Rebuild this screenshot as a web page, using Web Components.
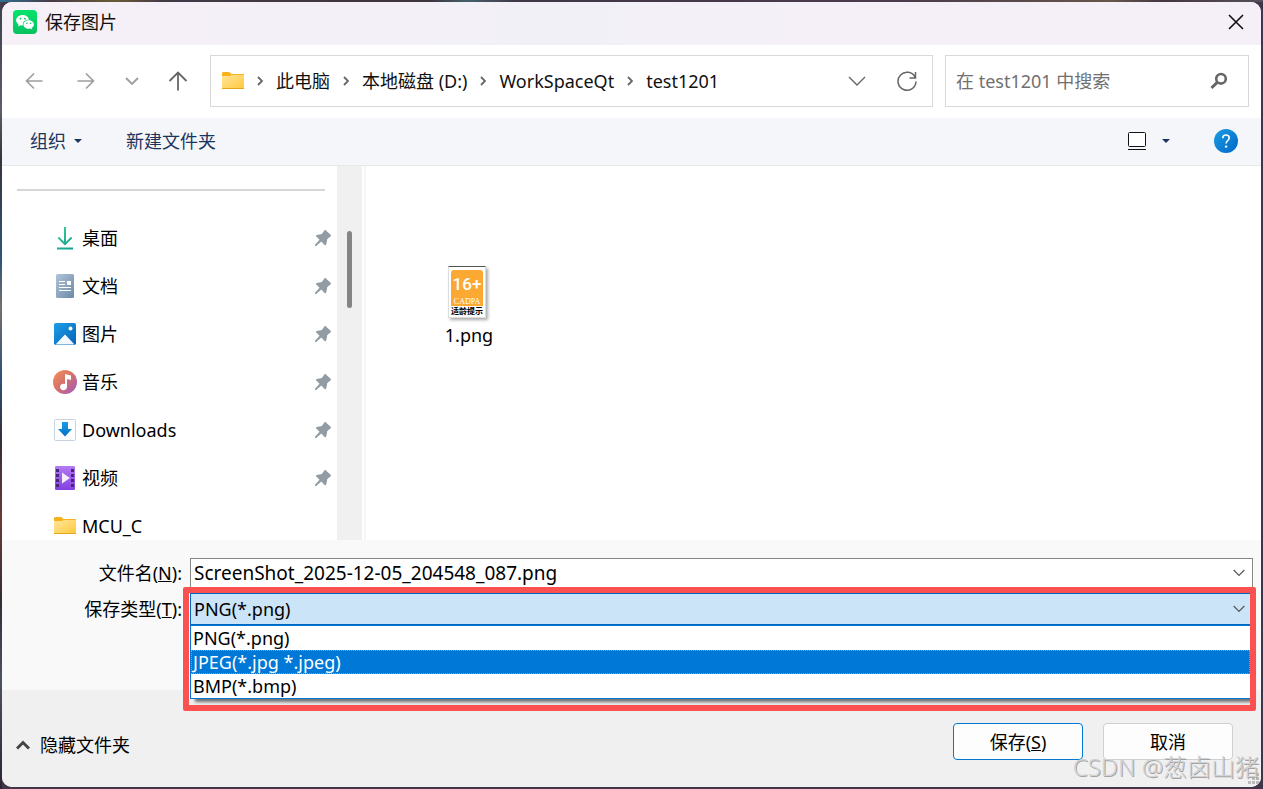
<!DOCTYPE html>
<html lang="zh-CN">
<head>
  <meta charset="utf-8">
  <meta name="viewport" content="width=device-width, initial-scale=1">
  <title>保存图片</title>
  <style>
    html, body { height: 100%; }
    body {
      box-sizing: border-box;
      margin: 0;
      padding: 2px;
      overflow: hidden;
      background:
        linear-gradient(90deg, #2f6f8c 0, #463c48 4%, #6b5a34 9%, #423a46 13%, #3c3540 34%, #46606b 37%, #3f3746 41%, #4b3c4c 72%, #66564a 88%, #443644 92%, #56505a 100%) top / 100% 2px no-repeat,
        linear-gradient(#3a3f4a 0, #5a5f68 14%, #39333c 20%, #2d5578 33%, #77706c 39%, #2d4f78 48%, #352f39 56%, #6b3a35 66%, #332d36 76%, #4d5360 86%, #2b2530 100%) left / 2px 100% no-repeat,
        #43344a;
      font: 18px/24px "Noto Sans", "Noto Sans CJK SC", sans-serif;
      color: #111;
    }
  </style>
</head>
<body>
  <save-dialog>
    <dialog-titlebar slot="title">保存图片</dialog-titlebar>
    <address-row slot="address" placeholder="在 test1201 中搜索">
      <a href="#pc">此电脑</a>
      <a href="#d">本地磁盘 (D:)</a>
      <a href="#workspace">WorkSpaceQt</a>
      <a href="#test1201">test1201</a>
    </address-row>
    <command-bar slot="commands"></command-bar>
    <nav-pane slot="nav">
      <nav-item icon="desktop" pinned>桌面</nav-item>
      <nav-item icon="document" pinned>文档</nav-item>
      <nav-item icon="picture" pinned>图片</nav-item>
      <nav-item icon="music" pinned>音乐</nav-item>
      <nav-item icon="download" pinned>Downloads</nav-item>
      <nav-item icon="video" pinned>视频</nav-item>
      <nav-item icon="folder">MCU_C</nav-item>
    </nav-pane>
    <file-tile slot="files">1.png</file-tile>
    <name-field slot="fields" value="ScreenShot_2025-12-05_204548_087.png">文件名(<u>N</u>):</name-field>
    <type-field slot="fields" active="1" options="PNG(*.png)|JPEG(*.jpg *.jpeg)|BMP(*.bmp)">保存类型(<u>T</u>):</type-field>
    <dialog-footer slot="footer"></dialog-footer>
  </save-dialog>

  <script>
    (() => {
      const ICONS = {
        wechat: {
          size: [24, 24],
          body: `
            <defs><linearGradient id="g" x1="0" y1="0" x2="0" y2="1"><stop offset="0" stop-color="#04e36c"/><stop offset="1" stop-color="#06c160"/></linearGradient></defs>
            <rect width="24" height="24" rx="4" fill="url(#g)"/>
            <path fill="#fff" d="M9.6 5C6 5 3.1 7.4 3.1 10.3c0 1.7 1 3.2 2.5 4.2L5 16.4l2.3-1.1c.8.2 1.7.3 2.6.3-.1-.4-.2-.8-.2-1.200 0-2.600 2.600-4.700 5.700-4.700h.6C15.500 6.900 12.800 5 9.600 5z"/>
            <path fill="#fff" d="M15.700 10.200c-2.900 0-5.300 1.900-5.300 4.300s2.400 4.300 5.300 4.300c.6 0 1.200-.1 1.800-.3l1.800.9-.5-1.600c1.300-.8 2.100-2 2.100-3.300 0-2.400-2.300-4.300-5.200-4.300z"/>
            <g fill="#05cc63"><circle cx="7.500" cy="8.700" r=".9"/><circle cx="11.900" cy="8.700" r=".9"/><circle cx="14" cy="13.200" r=".8"/><circle cx="17.500" cy="13.200" r=".8"/></g>`,
        },
        close: { size: [16, 16], body: '<path d="M1 1l14 14M15 1L1 15" fill="none" stroke="#111" stroke-width="1.600"/>' },
        back: { size: [18, 18], body: '<path d="M17.500 9H1.500M9 1.500L1.500 9 9 16.500" fill="none" stroke="#9d9d9d" stroke-width="1.600"/>' },
        forward: { size: [18, 18], body: '<path d="M.5 9h16M9 1.500L16.500 9 9 16.500" fill="none" stroke="#9d9d9d" stroke-width="1.600"/>' },
        recent: { size: [14, 8], body: '<path d="M1 1l6 6 6-6" fill="none" stroke="#9d9d9d" stroke-width="1.800"/>' },
        up: { size: [20, 20], body: '<path d="M10 19.500V2M1.500 10L10 1.500l8.500 8.500" fill="none" stroke="#666" stroke-width="1.800"/>' },
        folder: {
          size: [24, 20],
          body: `
            <defs><linearGradient id="g" x1="0" y1="0" x2="1" y2="1"><stop offset="0" stop-color="#ffe69b"/><stop offset="1" stop-color="#ffc83d"/></linearGradient></defs>
            <path d="M1 2.500C1 1.700 1.600 1 2.500 1h5.300c.5 0 .8.2 1.100.5L10.500 3H22c.6 0 1 .4 1 1v4H1z" fill="#f5b21a"/>
            <path d="M1 5h8l1.500-1H23v13.500c0 .3-.2.500-.5.500h-21c-.3 0-.5-.2-.5-.500z" fill="url(#g)"/>
            <path d="M1 17.500h22" stroke="#e5a51c"/>`,
        },
        crumb: { size: [6, 10], body: '<path d="M1 1l4 4-4 4" fill="none" stroke="#666" stroke-width="1.800"/>' },
        open: { size: [18, 10], body: '<path d="M1 1l8 8 8-8" fill="none" stroke="#666" stroke-width="1.400"/>' },
        refresh: { size: [22, 22], body: '<path d="M19.200 7.500A9 9 0 1 0 20 11.500M19.500 2v6h-6" fill="none" stroke="#666" stroke-width="1.500"/>' },
        search: { size: [18, 18], body: '<circle cx="11" cy="6.800" r="4.800" fill="none" stroke="#666" stroke-width="2.600"/><path d="M7.500 10.200L1.500 16" stroke="#666" stroke-width="3"/>' },
        caret: { size: [8, 4], body: '<path d="M0 0h8L4 4z" fill="#1c355e"/>' },
        view: { size: [20, 20], body: '<rect x="1.500" y="1.500" width="17" height="14" rx="1" fill="#fff" stroke="#111"/><path d="M1 18.500h18" stroke="#111"/>' },
        help: {
          size: [24, 24],
          body: `
            <defs><linearGradient id="g" x1="0" y1="0" x2="1" y2="1"><stop offset="0" stop-color="#1b9de2"/><stop offset="1" stop-color="#0067c8"/></linearGradient></defs>
            <circle cx="12" cy="12" r="12" fill="url(#g)"/>
            <path d="M8.800 9.200c0-2 1.400-3.200 3.200-3.200s3.200 1.100 3.200 2.900c0 2.500-3.100 2.700-3.100 5.600" fill="none" stroke="#fff" stroke-width="1.600"/><circle cx="12.100" cy="17.600" r="1.200" fill="#fff"/>`,
        },
        desktop: {
          size: [24, 24],
          body: `
            <defs><linearGradient id="g" gradientUnits="userSpaceOnUse" x1="4" y1="1" x2="20" y2="23"><stop offset="0" stop-color="#3dcf8e"/><stop offset="1" stop-color="#0f9d94"/></linearGradient></defs>
            <path d="M11 1h2v16h-2zM4.700 12.200L6 10.800l6 6 6-6 1.300 1.400-7.300 7.200zM4 21.500h16v2H4z" fill="url(#g)"/>`,
        },
        document: {
          size: [24, 24],
          body: `
            <defs><linearGradient id="g" x1="0" y1="0" x2="1" y2="1"><stop offset="0" stop-color="#b0c4d9"/><stop offset="1" stop-color="#6d89a8"/></linearGradient></defs>
            <rect x="3" width="18" height="24" rx="1.500" fill="url(#g)"/>
            <path d="M6 7.500h6M6 10.500h6M6 13.500h12M6 16.500h12" stroke="#fff" stroke-width="1.100"/><rect x="14" y="7" width="4" height="4" fill="#fff"/>`,
        },
        picture: {
          size: [24, 24],
          body: `
            <defs><linearGradient id="g" x1="0" y1="0" x2="1" y2="1"><stop offset="0" stop-color="#1ba0e6"/><stop offset="1" stop-color="#0562b8"/></linearGradient></defs>
            <rect x="1" y="1" width="22" height="22" rx="1.800" fill="url(#g)"/>
            <path d="M2.500 22.500l8.700-9.300c.5-.5 1.100-.5 1.600 0l8.700 9.300z" fill="#f4f9ff"/><circle cx="17.500" cy="6.500" r="2" fill="#fff"/>`,
        },
        music: {
          size: [24, 24],
          body: `
            <defs><linearGradient id="g" x1="0.100" y1="0.100" x2="0.900" y2="0.900"><stop offset="0" stop-color="#ef8a58"/><stop offset=".5" stop-color="#d4706e"/><stop offset="1" stop-color="#a85cb4"/></linearGradient></defs>
            <circle cx="12" cy="12" r="12" fill="url(#g)"/>
            <path d="M12 4l6 1.500v4.500l-4-1v8a3.500 3.200 0 1 1-2-2.900z" fill="#fff"/>`,
        },
        download: {
          size: [24, 24],
          body: `
            <defs><linearGradient id="g" x1="0" y1="0" x2="0" y2="1"><stop offset="0" stop-color="#189be4"/><stop offset="1" stop-color="#0670c9"/></linearGradient></defs>
            <rect x="1.500" y="1.500" width="21" height="21" rx="1" fill="#fcfdff" stroke="#c9d3e0"/>
            <path d="M9 4h6v7h4l-7 7.500L5 11h4z" fill="url(#g)"/>`,
        },
        video: {
          size: [24, 24],
          body: `
            <defs><linearGradient id="g" x1="0" y1="0" x2="0" y2="1"><stop offset="0" stop-color="#b37af5"/><stop offset="1" stop-color="#8440e0"/></linearGradient></defs>
            <rect x="2" width="20" height="24" rx="1.200" fill="url(#g)"/>
            <path d="M3 3h3v3H3zM3 8h3v3H3zM3 13h3v3H3zM3 18h3v3H3zM18 3h3v3h-3zM18 8h3v3h-3zM18 13h3v3h-3zM18 18h3v3h-3z" fill="#47267c"/>
            <path d="M9 6.500l8 5.500-8 5.500z" fill="#f5effd"/>`,
        },
        pin: { size: [16, 16], body: '<path d="M9.500.3c.5-.4 1.100-.3 1.500.1l4.600 4.400c.6.6.5 1.400-.2 1.800L12.300 9l-1 5.300c-.2 1-1 1.200-1.700.6L6.300 11.600 1.200 16H0v-1.200l4.500-5L1.300 6.500c-.6-.6-.4-1.400.5-1.600l5.100-1z" fill="#919ca3"/>' },
        combo: { size: [12, 8], body: '<path d="M.7 1L6 6.300 11.300 1" fill="none" stroke="#555" stroke-width="1.200"/>' },
        collapse: { size: [14, 10], body: '<path d="M1 8.500l6-6 6 6" fill="none" stroke="#444" stroke-width="3"/>' },
      };

      const RESET = `
        :host, *, *::before, *::after { box-sizing: border-box; }
        button, input, select {
          margin: 0;
          padding: 0;
          border: 0;
          border-radius: 0;
          outline: 0;
          background: none;
          color: inherit;
          font: inherit;
        }
        button {
          display: flex;
          align-items: center;
          justify-content: center;
        }
        a { color: inherit; text-decoration: none; }
      `;

      class BaseElement extends HTMLElement {
        constructor() {
          super();
          this.attachShadow({ mode: 'open' });
        }

        connectedCallback() {
          this.shadowRoot.innerHTML = `<style>${RESET}${this.styles()}</style>${this.markup()}`;
        }

        styles() { return ''; }
        markup() { return '<slot></slot>'; }
      }

      class UiIcon extends BaseElement {
        styles() {
          return `
            :host { display: inline-block; flex: none; line-height: 0; }
            svg { display: block; }
          `;
        }

        markup() {
          const { size: [w, h], body } = ICONS[this.getAttribute('name')];
          return `<svg width="${w}" height="${h}" viewBox="0 0 ${w} ${h}" aria-hidden="true">${body}</svg>`;
        }
      }

      class SaveDialog extends BaseElement {
        styles() {
          return `
            :host {
              position: relative;
              display: flex;
              flex-direction: column;
              height: 100%;
              border-radius: 10px;
              overflow: hidden;
              background: #fff;
            }
            .content {
              flex: 1;
              min-height: 0;
              display: grid;
              grid-template-columns: 364px 1fr;
              grid-template-rows: minmax(0, 1fr);
            }
            .files {
              display: flex;
              flex-wrap: wrap;
              align-content: flex-start;
              padding: 100px 28px 0;
            }
            .fields {
              display: grid;
              gap: 5px;
              padding: 18px 8px 65px 0;
              background: #f9f9f9;
            }
          `;
        }

        markup() {
          return `
            <slot name="title"></slot>
            <slot name="address"></slot>
            <slot name="commands"></slot>
            <div class="content">
              <slot name="nav"></slot>
              <main class="files"><slot name="files"></slot></main>
            </div>
            <div class="fields"><slot name="fields"></slot></div>
            <slot name="footer"></slot>
          `;
        }
      }

      class DialogTitlebar extends BaseElement {
        styles() {
          return `
            :host {
              display: flex;
              align-items: center;
              gap: 8px;
              height: 43px;
              padding: 0 0 3px 11px;
              background: linear-gradient(90deg, #f6f0f7, #f2f0f7 45%, #f5f0f7 65%, #f5f0f8);
            }
            .title { flex: 1; }
            button { width: 50px; height: 40px; }
          `;
        }

        markup() {
          return `
            <ui-icon name="wechat"></ui-icon>
            <span class="title"><slot></slot></span>
            <button aria-label="关闭"><ui-icon name="close"></ui-icon></button>
          `;
        }
      }

      class AddressRow extends BaseElement {
        styles() {
          return `
            :host {
              display: flex;
              height: 73px;
              padding: 10px 12px 11px 6px;
            }
            .history { display: flex; padding-right: 6px; }
            .history button { width: 52px; }
            .history .recent { width: 40px; }
            .path, .search {
              display: flex;
              align-items: center;
              border: 1px solid #d9d9d9;
            }
            .path { flex: 1; padding-left: 10px; }
            ol {
              flex: 1;
              display: flex;
              margin: 0;
              padding: 0;
              list-style: none;
              white-space: nowrap;
            }
            li { display: flex; align-items: center; }
            li ui-icon { margin: 0 13px 0 12px; }
            li + li ui-icon { margin: 0 13px; }
            .path button { width: 50px; height: 50px; }
            .search {
              width: 304px;
              margin-left: 12px;
              padding-left: 10px;
              color: #666;
            }
            input { flex: 1; min-width: 0; }
            input::placeholder { color: #707070; opacity: 1; }
            .search button { width: 58px; height: 50px; }
          `;
        }

        markup() {
          const crumbs = [...this.querySelectorAll('a')]
            .map(a => `<li><ui-icon name="crumb"></ui-icon>${a.outerHTML}</li>`)
            .join('');

          return `
            <nav class="history">
              <button aria-label="后退"><ui-icon name="back"></ui-icon></button>
              <button aria-label="前进"><ui-icon name="forward"></ui-icon></button>
              <button class="recent" aria-label="最近位置"><ui-icon name="recent"></ui-icon></button>
              <button aria-label="向上"><ui-icon name="up"></ui-icon></button>
            </nav>
            <div class="path">
              <ui-icon name="folder"></ui-icon>
              <ol>${crumbs}</ol>
              <button aria-label="展开"><ui-icon name="open"></ui-icon></button>
              <button aria-label="刷新"><ui-icon name="refresh"></ui-icon></button>
            </div>
            <div class="search">
              <input type="search" aria-label="搜索" placeholder="${this.getAttribute('placeholder')}">
              <button aria-label="搜索"><ui-icon name="search"></ui-icon></button>
            </div>
          `;
        }
      }

      class CommandBar extends BaseElement {
        styles() {
          return `
            :host {
              display: flex;
              align-items: center;
              height: 48px;
              padding: 0 23px 2px 28px;
              border-bottom: 1px solid #e6e8ea;
              background: #f4f6f9;
              color: #1c355e;
            }
            button { height: 40px; gap: 8px; }
            .new { margin: 0 auto 0 44px; }
            .view { gap: 15px; margin-right: 44px; }
          `;
        }

        markup() {
          return `
            <button>组织<ui-icon name="caret"></ui-icon></button>
            <button class="new">新建文件夹</button>
            <button class="view" aria-label="更改视图"><ui-icon name="view"></ui-icon><ui-icon name="caret"></ui-icon></button>
            <button aria-label="帮助"><ui-icon name="help"></ui-icon></button>
          `;
        }
      }

      class NavPane extends BaseElement {
        styles() {
          return `
            :host {
              display: flex;
              min-height: 0;
              overflow: hidden;
              border-right: 2px solid #f5f5f5;
            }
            .tree { flex: 1; min-width: 0; }
            hr {
              height: 2px;
              margin: 23px 12px 23px 15px;
              border: 0;
              background: #d6d6d6;
            }
            .track {
              width: 25px;
              margin-right: 2px;
              padding: 65px 10px 0;
              background: #f0f0f0;
            }
            .thumb {
              height: 77px;
              border-radius: 3px;
              background: #858585;
            }
          `;
        }

        markup() {
          return `
            <nav class="tree"><hr><slot></slot></nav>
            <div class="track"><div class="thumb"></div></div>
          `;
        }
      }

      class NavItem extends BaseElement {
        styles() {
          return `
            :host { display: block; color: #000; }
            a {
              display: flex;
              align-items: center;
              gap: 5px;
              height: 48px;
              padding: 0 6px 0 51px;
            }
            span { flex: 1; }
          `;
        }

        markup() {
          const pin = this.hasAttribute('pinned') ? '<ui-icon name="pin"></ui-icon>' : '';
          const icon = this.getAttribute('icon');
          return `<a href="#${icon}"><ui-icon name="${icon}"></ui-icon><span><slot></slot></span>${pin}</a>`;
        }
      }

      class FileTile extends BaseElement {
        styles() {
          return `
            :host {
              display: flex;
              flex-direction: column;
              align-items: center;
              gap: 5px;
              width: 150px;
              color: #000;
            }
            .thumb {
              display: flex;
              flex-direction: column;
              width: 38px;
              height: 52px;
              margin-right: 4px;
              padding: 3px 2px 0;
              border: 1px solid #ddd;
              border-top-color: #555;
              background: #fff;
              box-shadow: 2px 2px 3px #0005;
              text-align: center;
              white-space: nowrap;
            }
            .badge {
              height: 36px;
              border-radius: 3px 3px 0 0;
              background: #fba933;
              color: #fff;
            }
            .age { font: 500 17px/28px Roboto, sans-serif; }
            .org { font: 8px/8px "Liberation Serif", serif; }
            .hint {
              display: flex;
              justify-content: center;
              font: bold 8px/10px "Noto Sans CJK SC", sans-serif;
            }
          `;
        }

        markup() {
          return `
            <div class="thumb">
              <div class="badge"><div class="age">16+</div><div class="org">CADPA</div></div>
              <div class="hint">适龄提示</div>
            </div>
            <slot></slot>
          `;
        }
      }

      const FIELD_STYLES = `
        :host {
          display: grid;
          grid-template-columns: 180px 1fr;
          gap: 8px;
          color: #000;
        }
        label { align-self: center; text-align: right; }
      `;

      class NameField extends BaseElement {
        styles() {
          return `
            ${FIELD_STYLES}
            .box {
              display: flex;
              height: 30px;
              border: 1px solid #868686;
              background: #fff;
            }
            input {
              flex: 1;
              min-width: 0;
              padding-left: 3px;
              font-size: 19px;
            }
            button { width: 26px; }
          `;
        }

        markup() {
          return `
            <label for="name"><slot></slot></label>
            <div class="box">
              <input id="name" value="${this.getAttribute('value')}">
              <button aria-label="历史名称"><ui-icon name="combo"></ui-icon></button>
            </div>
          `;
        }
      }

      class TypeField extends BaseElement {
        styles() {
          return `
            ${FIELD_STYLES}
            .box {
              position: relative;
              display: grid;
              align-items: center;
              height: 32px;
            }
            select, .box > ui-icon { grid-area: 1 / 1; }
            select {
              appearance: none;
              width: 100%;
              height: 32px;
              padding-left: 3px;
              border: 1px solid #0067c0;
              background: #cce4f7;
            }
            .box > ui-icon {
              justify-self: end;
              margin-right: 8px;
              pointer-events: none;
            }
            ul {
              position: absolute;
              z-index: 1;
              top: 100%;
              left: 0;
              right: 2px;
              margin: 0;
              padding: 0;
              border: 1px solid #0078d7;
              background: #fff;
              box-shadow: 4px 4px 3px -1px #0008;
              list-style: none;
            }
            li { padding-left: 2px; }
            li[aria-selected="true"] {
              background: #0078d7;
              color: #fff;
              outline: 1px dotted #e08a3c;
              outline-offset: -1px;
            }
            /* annotation frame around the open drop-down */
            .frame {
              position: absolute;
              z-index: 2;
              inset: -6px -3px -86px -7px;
              border: 6px solid #fc5151;
              border-radius: 2px;
              pointer-events: none;
            }
          `;
        }

        markup() {
          const options = this.getAttribute('options').split('|');
          const active = +this.getAttribute('active');

          return `
            <label for="type"><slot></slot></label>
            <div class="box">
              <select id="type">${options.map(o => `<option>${o}</option>`).join('')}</select>
              <ui-icon name="combo"></ui-icon>
              <ul role="listbox">
                ${options.map((o, ndx) => `<li role="option" aria-selected="${ndx === active}">${o}</li>`).join('')}
              </ul>
              <div class="frame"></div>
            </div>
          `;
        }
      }

      class DialogFooter extends BaseElement {
        styles() {
          return `
            :host {
              position: relative;
              display: flex;
              align-items: flex-start;
              gap: 20px;
              height: 97px;
              padding: 33px 28px 0 14px;
              background: #f0f0f0;
              color: #000;
            }
            .toggle { gap: 10px; height: 44px; margin-right: auto; }
            .action {
              display: block;
              width: 130px;
              height: 37px;
              border: 1px solid #d0d0d0;
              border-radius: 4px;
              background: #fdfdfd;
            }
            .primary { border-color: #0078d4; }
            .mark {
              position: absolute;
              right: 2px;
              bottom: 4px;
              color: #d2d2d2;
              font-size: 24px;
              font-weight: 300;
              line-height: 32px;
              text-shadow: 1px 1px 0 #a4a4a4;
              white-space: nowrap;
            }
            .grip {
              position: absolute;
              right: 1px;
              bottom: 2px;
            }
          `;
        }

        markup() {
          return `
            <button class="toggle"><ui-icon name="collapse"></ui-icon>隐藏文件夹</button>
            <button class="action primary">保存(<u>S</u>)</button>
            <button class="action">取消</button>
            <svg class="grip" width="12" height="12" viewBox="0 0 12 12" aria-hidden="true">
              <path d="M8 0h3v3H8zM4 4h3v3H4zM8 4h3v3H8zM0 8h3v3H0zM4 8h3v3H4zM8 8h3v3H8z" fill="#bbb"/>
            </svg>
            <span class="mark">CSDN @葱卤山猪</span>
          `;
        }
      }

      const ELEMENTS = {
        'ui-icon': UiIcon,
        'save-dialog': SaveDialog,
        'dialog-titlebar': DialogTitlebar,
        'address-row': AddressRow,
        'command-bar': CommandBar,
        'nav-pane': NavPane,
        'nav-item': NavItem,
        'file-tile': FileTile,
        'name-field': NameField,
        'type-field': TypeField,
        'dialog-footer': DialogFooter,
      };

      Object.entries(ELEMENTS).forEach(([name, cls]) => {
        if (!window.customElements.get(name)) window.customElements.define(name, cls);
      });
    })();
  </script>
</body>
</html>
